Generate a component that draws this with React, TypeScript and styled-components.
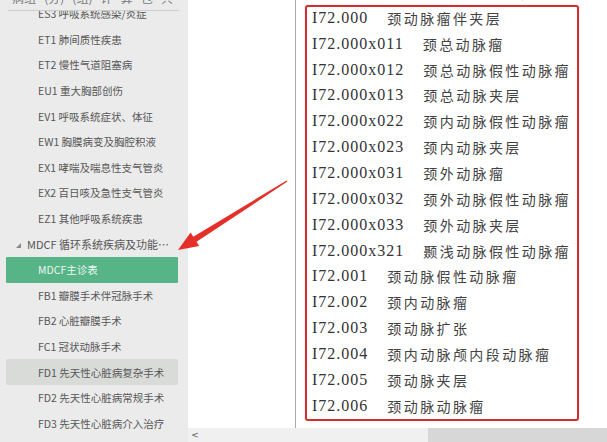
import React from "react";
import styled, { createGlobalStyle } from "styled-components";

const Global = createGlobalStyle`
  html, body { margin: 0; padding: 0; background: #ffffff; }
  body { width: 607px; height: 442px; overflow: hidden; }
  #root { width: 607px; height: 442px; }
`;

const Page = styled.div`
  position: relative;
  width: 607px;
  height: 442px;
  display: flex;
  overflow: hidden;
  background: #ffffff;
`;

const Sidebar = styled.aside`
  width: 188px;
  flex: none;
  height: 100%;
  background: #ebebeb;
  display: flex;
  flex-direction: column;
  font-family: "Noto Sans CJK SC", "Noto Sans", sans-serif;
`;

const SideHeader = styled.div`
  height: 10px;
  margin: 0 9px 0 8px;
  border-bottom: 1px solid #cdcdcd;
  overflow: hidden;
  position: relative;
  z-index: 1;
  background: #ebebeb;
`;

const HeaderTabs = styled.div`
  display: flex;
  justify-content: space-between;
  padding: 0 6px 0 4px;
  margin-top: -9px;
  font-size: 12px;
  line-height: 14px;
  color: #7a7a7a;
`;

const ListViewport = styled.div`
  flex: 1;
  overflow: hidden;
`;

const ListInner = styled.div`
  margin-top: -10px;
  display: flex;
  flex-direction: column;
`;

const Item = styled.div<{ $variant?: "selected" | "hover" }>`
  height: 25.6px;
  margin: 0 10px 0 6px;
  padding-left: 32px;
  display: flex;
  align-items: center;
  font-size: 10.5px;
  white-space: nowrap;
  color: ${(p) => (p.$variant === "selected" ? "#eaf7f0" : "#575757")};
  background: ${(p) =>
    p.$variant === "selected" ? "#57b487" : p.$variant === "hover" ? "#d9dbd9" : "transparent"};
  border-radius: 1px;
`;

const GroupItem = styled.div`
  height: 25.6px;
  margin: 0 14px 0 6px;
  padding-left: 10px;
  display: flex;
  align-items: center;
  gap: 6px;
  font-size: 11px;
  color: #555;
  white-space: nowrap;
  overflow: hidden;
`;

const Caret = styled.span`
  flex: none;
  width: 0;
  height: 0;
  border-left: 5px solid transparent;
  border-bottom: 5px solid #8a8a8a;
  margin-top: 2px;
`;

const GroupLabel = styled.span`
  overflow: hidden;
  text-overflow: ellipsis;
`;

const Main = styled.main`
  flex: 1;
  display: flex;
  flex-direction: column;
  min-width: 0;
`;

const Body = styled.div`
  flex: 1;
  display: flex;
  overflow: hidden;
`;

const Gutter = styled.div`
  width: 107px;
  flex: none;
  background: #ffffff;
  border-right: 1px solid #a9a9a9;
`;

const Content = styled.div`
  flex: 1;
  overflow: hidden;
  font-family: "Liberation Serif", serif;
  color: #333;
`;

const Scrolled = styled.div`
  margin-top: -20.9px;
  display: flex;
  flex-direction: column;
`;

const Row = styled.div<{ $outside?: boolean }>`
  height: 25.87px;
  display: flex;
  align-items: center;
  padding-left: ${(p) => (p.$outside ? "16px" : "5px")};
  white-space: nowrap;
`;

const Code = styled.span`
  font-size: 16px;
  letter-spacing: 1px;
  margin-right: 19px;
`;

const Name = styled.span`
  font-family: "Noto Sans CJK SC", sans-serif;
  font-size: 14px;
  letter-spacing: 2.4px;
  color: #424242;
`;

const RedBox = styled.div`
  margin-left: 9px;
  width: 270px;
  border: 2px solid #d2302c;
  border-radius: 3px;
  box-shadow: 0 0 1px rgba(200, 40, 40, 0.5);
`;

const BoxRows = styled.div`
  margin-top: -2px;
  display: flex;
  flex-direction: column;
`;

const HScroll = styled.div`
  height: 14px;
  flex: none;
  display: flex;
  background: #f0f0f0;
`;

const ScrollBtn = styled.div`
  width: 14px;
  display: flex;
  align-items: center;
  justify-content: center;
  font-family: "DejaVu Sans", sans-serif;
  font-size: 9px;
  color: #555;
`;

const Track = styled.div`
  flex: 1;
  display: flex;
  justify-content: flex-end;
`;

const Thumb = styled.div`
  width: 179px;
  height: 100%;
  background: #d7d7d7;
`;

const ArrowSvg = styled.svg`
  position: absolute;
  left: 0;
  top: 0;
  pointer-events: none;
`;

const sideItems: { label: string; variant?: "selected" | "hover"; group?: boolean }[] = [
  { label: "ES3 呼吸系统感染/炎症" },
  { label: "ET1 肺间质性疾患" },
  { label: "ET2 慢性气道阻塞病" },
  { label: "EU1 重大胸部创伤" },
  { label: "EV1 呼吸系统症状、体征" },
  { label: "EW1 胸膜病变及胸腔积液" },
  { label: "EX1 哮喘及喘息性支气管炎" },
  { label: "EX2 百日咳及急性支气管炎" },
  { label: "EZ1 其他呼吸系统疾患" },
  { label: "MDCF 循环系统疾病及功能障碍", group: true },
  { label: "MDCF主诊表", variant: "selected" },
  { label: "FB1 瓣膜手术伴冠脉手术" },
  { label: "FB2 心脏瓣膜手术" },
  { label: "FC1 冠状动脉手术" },
  { label: "FD1 先天性心脏病复杂手术", variant: "hover" },
  { label: "FD2 先天性心脏病常规手术" },
  { label: "FD3 先天性心脏病介入治疗" },
];

const boxed: [string, string][] = [
  ["I72.000", "颈动脉瘤伴夹层"],
  ["I72.000x011", "颈总动脉瘤"],
  ["I72.000x012", "颈总动脉假性动脉瘤"],
  ["I72.000x013", "颈总动脉夹层"],
  ["I72.000x022", "颈内动脉假性动脉瘤"],
  ["I72.000x023", "颈内动脉夹层"],
  ["I72.000x031", "颈外动脉瘤"],
  ["I72.000x032", "颈外动脉假性动脉瘤"],
  ["I72.000x033", "颈外动脉夹层"],
  ["I72.000x321", "颞浅动脉假性动脉瘤"],
  ["I72.001", "颈动脉假性动脉瘤"],
  ["I72.002", "颈内动脉瘤"],
  ["I72.003", "颈动脉扩张"],
  ["I72.004", "颈内动脉颅内段动脉瘤"],
  ["I72.005", "颈动脉夹层"],
  ["I72.006", "颈动脉动脉瘤"],
];

export default function App() {
  return (
    <>
      <Global />
      <Page>
        <Sidebar>
          <SideHeader>
            <HeaderTabs>
              <span>病组</span>
              <span>(分)</span>
              <span>(组)</span>
              <span>计</span>
              <span>算</span>
              <span>包</span>
              <span>共</span>
            </HeaderTabs>
          </SideHeader>
          <ListViewport>
            <ListInner>
              {sideItems.map((it) =>
                it.group ? (
                  <GroupItem key={it.label}>
                    <Caret />
                    <GroupLabel>{it.label}</GroupLabel>
                  </GroupItem>
                ) : (
                  <Item key={it.label} $variant={it.variant}>
                    {it.label}
                  </Item>
                )
              )}
            </ListInner>
          </ListViewport>
        </Sidebar>
        <Main>
          <Body>
            <Gutter />
            <Content>
              <Scrolled>
                <Row $outside>
                  <Code>I72.0</Code>
                  <Name>颈动脉和颞动脉动脉瘤</Name>
                </Row>
                <RedBox>
                  <BoxRows>
                    {boxed.map(([c, n]) => (
                      <Row key={c}>
                        <Code>{c}</Code>
                        <Name>{n}</Name>
                      </Row>
                    ))}
                  </BoxRows>
                </RedBox>
                <Row $outside>
                  <Code>I72.100</Code>
                  <Name>上肢动脉瘤伴夹层</Name>
                </Row>
              </Scrolled>
            </Content>
          </Body>
          <HScroll>
            <ScrollBtn>&lt;</ScrollBtn>
            <Track>
              <Thumb />
            </Track>
          </HScroll>
        </Main>
        <ArrowSvg width="607" height="442" viewBox="0 0 607 442">
          <polygon
            points="178,250 190.6,232.5 193.3,236.8 286.6,180.4 287.4,181.6 196.5,241.8 199.2,246.1"
            fill="#e5302a"
          />
        </ArrowSvg>
      </Page>
    </>
  );
}
